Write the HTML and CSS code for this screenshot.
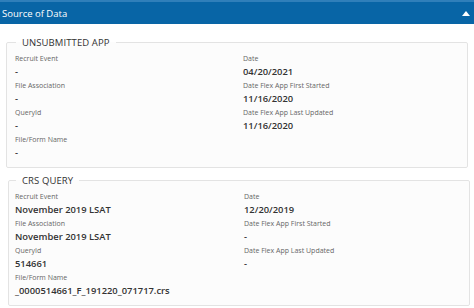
FILE: index.html
```html
<!DOCTYPE html>
<html lang="en">
<head>
  <meta charset="UTF-8">
  <title>Source of Data</title>
  <link rel="stylesheet" href="styles.css">
</head>
<body>

  <!-- Barra de titulo -->
  <div class="panel-header">
    <span>Source of Data</span>
    <span class="arrow"></span>
  </div>

  <div class="panel-body">

    <fieldset class="source">
      <legend>UNSUBMITTED APP</legend>
      <div class="fields">
        <div class="col">
          <div class="label">Recruit Event</div>
          <div class="value">-</div>
          <div class="label">File Association</div>
          <div class="value">-</div>
          <div class="label">QueryId</div>
          <div class="value">-</div>
          <div class="label">File/Form Name</div>
          <div class="value">-</div>
        </div>
        <div class="col">
          <div class="label">Date</div>
          <div class="value">04/20/2021</div>
          <div class="label">Date Flex App First Started</div>
          <div class="value">11/16/2020</div>
          <div class="label">Date Flex App Last Updated</div>
          <div class="value">11/16/2020</div>
        </div>
      </div>
    </fieldset>

    <fieldset class="source second">
      <legend>CRS QUERY</legend>
      <div class="fields">
        <div class="col">
          <div class="label">Recruit Event</div>
          <div class="value">November 2019 LSAT</div>
          <div class="label">File Association</div>
          <div class="value">November 2019 LSAT</div>
          <div class="label">QueryId</div>
          <div class="value">514661</div>
          <div class="label">File/Form Name</div>
          <div class="value">_0000514661_F_191220_071717.crs</div>
        </div>
        <div class="col">
          <div class="label">Date</div>
          <div class="value">12/20/2019</div>
          <div class="label">Date Flex App First Started</div>
          <div class="value">-</div>
          <div class="label">Date Flex App Last Updated</div>
          <div class="value">-</div>
        </div>
      </div>
    </fieldset>

  </div>

</body>
</html>
```

FILE: styles.css
```css
body {
  margin: 0;
  background: #fff;
  color: #333;
  font-family: 'Open Sans', sans-serif;
  overflow: hidden;
}

.panel-header {
  height: 24px;
  background: #0865a6;
  border-top: 2px solid #2f7fba;
  box-sizing: border-box;
  color: #fff;
  font-size: 9.5px;
  display: flex;
  align-items: center;
  justify-content: space-between;
  padding: 0 4px 0 2px;
}

.arrow {
  width: 0;
  height: 0;
  border-left: 4px solid transparent;
  border-right: 4px solid transparent;
  border-bottom: 5px solid #fff;
}

.panel-body {
  padding: 12px 6px 0 6px;
}

.source {
  margin: 0;
  padding: 0 8px 7px 8px;
  background: #fcfcfc;
  border: 1px solid #e3e3e3;
  border-radius: 2px;
}

.source.second {
  margin: 6px -2px 0 2px;
  padding-left: 6px;
}

legend {
  font-size: 9.5px;
  color: #333;
  padding: 0 6px;
  margin-left: 1px;
  letter-spacing: 0.1px;
}

.fields {
  display: grid;
  grid-template-columns: 228px 1fr;
  padding-top: 3px;
}

.second .fields {
  grid-template-columns: 229px 1fr;
}

.label {
  font-size: 7px;
  color: #666;
  line-height: 13px;
}

.value {
  font-size: 9.4px;
  font-weight: 600;
  color: #333;
  line-height: 14px;
}
```
